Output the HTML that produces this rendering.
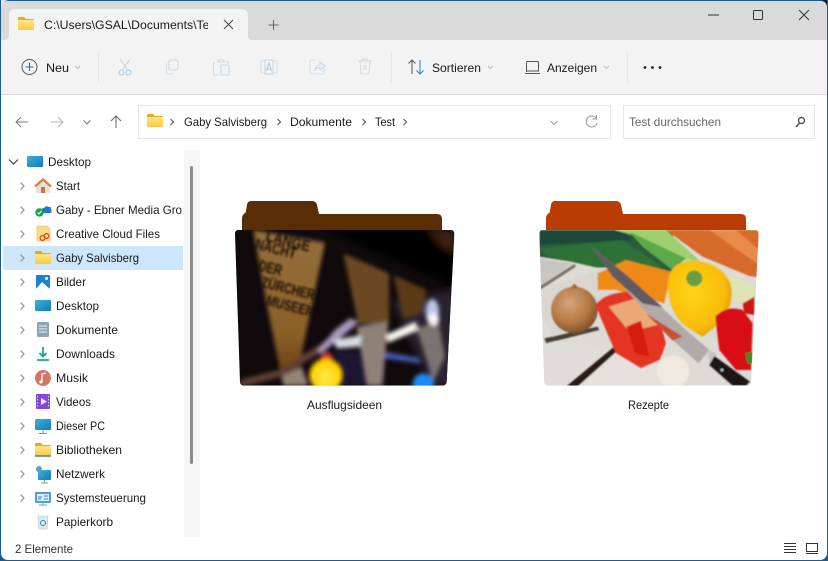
<!DOCTYPE html>
<html><head><meta charset="utf-8"><style>
html,body{margin:0;padding:0;background:#fff;width:828px;height:561px;overflow:hidden}
svg{display:block}
text{font-family:"Liberation Sans",sans-serif;font-size:12px;fill:#1a1a1a}
</style></head><body>
<svg width="828" height="561" viewBox="0 0 828 561" xmlns="http://www.w3.org/2000/svg">
<defs>
<linearGradient id="fy" x1="0" y1="0" x2="0" y2="1"><stop offset="0" stop-color="#ffe58a"/><stop offset="1" stop-color="#fbc93f"/></linearGradient>
<linearGradient id="sc" x1="0" y1="0" x2="1" y2="1"><stop offset="0" stop-color="#36b4dc"/><stop offset="1" stop-color="#1578b8"/></linearGradient>
<radialGradient id="on" cx=".4" cy=".35" r=".7"><stop offset="0" stop-color="#d8a478"/><stop offset=".6" stop-color="#b47844"/><stop offset="1" stop-color="#7a4a22"/></radialGradient>
<radialGradient id="yp" cx=".4" cy=".4" r=".7"><stop offset="0" stop-color="#ffd418"/><stop offset=".7" stop-color="#f8bc08"/><stop offset="1" stop-color="#e09000"/></radialGradient>
<radialGradient id="bulb" cx=".5" cy=".55" r=".55"><stop offset="0" stop-color="#ffe850"/><stop offset=".8" stop-color="#ffd400"/><stop offset="1" stop-color="#f0a000"/></radialGradient>
<linearGradient id="penn" x1="0" y1="0" x2="0" y2="1"><stop offset="0" stop-color="#94703a"/><stop offset=".7" stop-color="#8a5f28"/><stop offset="1" stop-color="#6a3a10"/></linearGradient>
<symbol id="folder" viewBox="0 0 16 13"><path d="M0 1.500Q0 0 1.500 0H6L8 2H14.500Q16 2 16 3.500V4H0Z" fill="#e8a820"/><path d="M0 3.500Q0 3 .6 3H15.400Q16 3 16 3.500V11.500Q16 13 14.500 13H1.500Q0 13 0 11.500Z" fill="url(#fy)"/></symbol>
<symbol id="chev" viewBox="0 0 8 10"><path d="M2.500 1.500L6 5L2.500 8.500" fill="none" stroke="#9a9a9a" stroke-width="1.300"/></symbol>
<symbol id="bc" viewBox="0 0 6 8"><path d="M1.500 1L4.500 4L1.500 7" fill="none" stroke="#555" stroke-width="1.100"/></symbol>
<filter id="b1" x="-10%" y="-10%" width="120%" height="120%"><feGaussianBlur stdDeviation="6"/></filter>
<filter id="b2" x="-30%" y="-30%" width="160%" height="160%"><feGaussianBlur stdDeviation="12"/></filter>
<filter id="b3" x="-10%" y="-10%" width="120%" height="120%"><feGaussianBlur stdDeviation="3"/></filter>
<filter id="b4" x="-10%" y="-10%" width="120%" height="120%"><feGaussianBlur stdDeviation="2.200"/></filter>
<clipPath id="fc"><path d="M40 120H676Q688 120 688 132L665 575Q664 587 652 587H57Q46 587 45 575L30 132Q30 120 40 120Z"/></clipPath>
<clipPath id="tabclip"><rect x="40" y="10" width="168" height="30"/></clipPath>
</defs>

<!-- window frame -->
<rect width="828" height="561" fill="#fff"/>
<rect x="0" y="0" width="828" height="561" fill="#1d5c8f"/>
<path d="M0 0H8Q1.500 1.500 1 9V0Z" fill="#dbe6ef"/>
<path d="M828 0H820Q827 1 827 8V0Z" fill="#0b2236"/>
<rect x="1" y="1" width="826" height="559" rx="7" fill="#fff"/>
<path d="M1 8Q1 1 8 1H820Q827 1 827 8V40H1Z" fill="#dadada"/>
<path d="M1 40H827V94H1Z" fill="#f3f3f3"/>
<rect x="1" y="94" width="826" height="1" fill="#d9d9d9"/>
<path d="M3 40H4Q9 40 9 35V16Q9 9 16 9H241Q248 9 248 16V35Q248 40 253 40H254Z" fill="#f3f3f3"/>

<!-- tab -->
<use href="#folder" x="18" y="17" width="16" height="13"/>
<g clip-path="url(#tabclip)"><text x="44" y="29" textLength="175" lengthAdjust="spacingAndGlyphs">C:\Users\GSAL\Documents\Test</text></g>
<path d="M224 20L233 29M233 20L224 29" stroke="#444" stroke-width="1" fill="none"/>
<path d="M268.500 25H278.500M273.500 20V30" stroke="#666" stroke-width="1" fill="none"/>

<!-- window controls -->
<path d="M708 15H719" stroke="#333" stroke-width="1"/>
<rect x="753.500" y="10.500" width="9" height="9" rx="1" fill="none" stroke="#333"/>
<path d="M799 10L809 20M809 10L799 20" stroke="#333" fill="none"/>

<!-- toolbar -->
<circle cx="29.500" cy="67" r="7.500" fill="none" stroke="#555" stroke-width="1"/>
<path d="M25.500 67H33.500M29.500 63V71" stroke="#1a6fc0" stroke-width="1"/>
<text x="46" y="72" textLength="23" lengthAdjust="spacingAndGlyphs">Neu</text>
<path d="M75 66L77.500 68.500L80 66" fill="none" stroke="#bbb"/>
<rect x="98" y="52" width="1" height="30" fill="#e6e6e6"/>
<g fill="none" stroke="#c4d8e8" stroke-width="1.100">
<path d="M120 59L127.500 70M130 59L122.500 70" stroke="#d0d0d0"/>
<circle cx="121.500" cy="72.500" r="2.500" stroke="#a8cce4"/><circle cx="128.500" cy="72.500" r="2.500" stroke="#a8cce4"/>
<rect x="169" y="60" width="9" height="10" rx="2"/>
<path d="M166.500 63V72Q166.500 74 168.500 74H174" stroke="#d8dee4"/>
<path d="M215 63H213.500V75H219M218 60H224V62H218ZM226 62H228V64" stroke="#d8d8d8"/>
<rect x="221" y="65" width="8" height="10" rx="1"/>
<path d="M265 61H261V73H265M273 61H277V73H273" stroke="#d8dee4"/>
<rect x="265" y="60" width="8" height="14" rx="0"/>
<path d="M266.500 71L269 63L271.500 71M267.300 69H270.700" stroke="#b8c8d8"/>
<path d="M316 60H312Q310 60 310 62V72Q310 74 312 74H322Q324 74 324 72V69" stroke="#d8dee4"/>
<path d="M315 70Q315 65 320 65V62L325 66L320 70V67.500Q317 67.500 315 70Z"/>
<path d="M358 61H372M363 61V59H367V61M360 61L361 74H369L370 61M364 65V70M366 65V70" stroke="#d8d8d8"/>
</g>
<rect x="391" y="52" width="1" height="30" fill="#e6e6e6"/>
<path d="M412 74V60M408.500 63.500L412 60L415.500 63.500" fill="none" stroke="#555"/>
<path d="M420 60V74M416.500 70.500L420 74L423.500 70.500" fill="none" stroke="#2a7fc8"/>
<text x="432" y="72" textLength="49" lengthAdjust="spacingAndGlyphs">Sortieren</text>
<path d="M488 66L490.500 68.500L493 66" fill="none" stroke="#bbb"/>
<path d="M526.500 72V62.500Q526.500 61.500 527.500 61.500H537.500Q538.500 61.500 538.500 62.500V71H526.500" fill="none" stroke="#555"/>
<path d="M525 73.500H540" stroke="#555"/>
<text x="547" y="72" textLength="50" lengthAdjust="spacingAndGlyphs">Anzeigen</text>
<path d="M604 66L606.500 68.500L609 66" fill="none" stroke="#bbb"/>
<rect x="627" y="52" width="1" height="30" fill="#e6e6e6"/>
<circle cx="645" cy="67.500" r="1.400" fill="#222"/><circle cx="652.500" cy="67.500" r="1.400" fill="#222"/><circle cx="660" cy="67.500" r="1.400" fill="#222"/>

<!-- nav bar -->
<path d="M16 122H28M21 117L16 122L21 127" fill="none" stroke="#777" stroke-width="1"/>
<path d="M51 122H63M58 117L63 122L58 127" fill="none" stroke="#b4b4b4" stroke-width="1"/>
<path d="M83.500 120.500L87 124L90.500 120.500" fill="none" stroke="#777"/>
<path d="M116 128V116M111 121L116 116L121 121" fill="none" stroke="#666"/>
<rect x="138.500" y="105.500" width="472" height="33" fill="#fff" stroke="#e6e6e6"/>
<use href="#folder" x="147" y="114" width="16" height="13"/>
<use href="#bc" x="169" y="118" width="6" height="8"/>
<text x="184" y="126" textLength="83" lengthAdjust="spacingAndGlyphs">Gaby Salvisberg</text>
<use href="#bc" x="276" y="118" width="6" height="8"/>
<text x="290" y="126" textLength="62" lengthAdjust="spacingAndGlyphs">Dokumente</text>
<use href="#bc" x="361" y="118" width="6" height="8"/>
<text x="375" y="126" textLength="20" lengthAdjust="spacingAndGlyphs">Test</text>
<use href="#bc" x="402" y="118" width="6" height="8"/>
<path d="M550.500 121L554 124.500L557.500 121" fill="none" stroke="#999"/>
<path d="M596 118A5.500 5.500 0 1 0 597 123M596.500 115V119H592.500" fill="none" stroke="#999"/>
<rect x="623.500" y="105.500" width="191" height="33" fill="#fff" stroke="#e6e6e6"/>
<text x="629" y="126" textLength="92" lengthAdjust="spacingAndGlyphs" style="fill:#666">Test durchsuchen</text>
<circle cx="801.500" cy="120.500" r="3" fill="none" stroke="#555" stroke-width="1.400"/>
<path d="M799.500 123L796 127" stroke="#555" stroke-width="1.600"/>

<!-- sidebar -->
<rect x="184" y="150" width="16" height="387" fill="#f5f5f5"/>
<rect x="190" y="166" width="3" height="298" rx="1.500" fill="#8b8b8b"/>
<rect x="3" y="246" width="180" height="24" fill="#cde6fb"/>

<path d="M9 159.500L13.500 164L18 159.500" fill="none" stroke="#444" stroke-width="1.200"/>
<rect x="27" y="156" width="16" height="11" rx="1" fill="url(#sc)"/>
<text x="48" y="166" textLength="43" lengthAdjust="spacingAndGlyphs">Desktop</text>

<use href="#chev" x="18" y="181" width="8" height="10"/>
<use href="#chev" x="18" y="205" width="8" height="10"/>
<use href="#chev" x="18" y="229" width="8" height="10"/>
<use href="#chev" x="18" y="253" width="8" height="10"/>
<use href="#chev" x="18" y="277" width="8" height="10"/>
<use href="#chev" x="18" y="301" width="8" height="10"/>
<use href="#chev" x="18" y="325" width="8" height="10"/>
<use href="#chev" x="18" y="349" width="8" height="10"/>
<use href="#chev" x="18" y="373" width="8" height="10"/>
<use href="#chev" x="18" y="397" width="8" height="10"/>
<use href="#chev" x="18" y="421" width="8" height="10"/>
<use href="#chev" x="18" y="445" width="8" height="10"/>
<use href="#chev" x="18" y="469" width="8" height="10"/>
<use href="#chev" x="18" y="493" width="8" height="10"/>

<text x="56" y="190" textLength="24" lengthAdjust="spacingAndGlyphs">Start</text>
<text x="56" y="214" textLength="126" lengthAdjust="spacingAndGlyphs">Gaby - Ebner Media Gro</text>
<text x="56" y="238" textLength="104" lengthAdjust="spacingAndGlyphs">Creative Cloud Files</text>
<text x="56" y="262" textLength="83" lengthAdjust="spacingAndGlyphs">Gaby Salvisberg</text>
<text x="56" y="286" textLength="30" lengthAdjust="spacingAndGlyphs">Bilder</text>
<text x="56" y="310" textLength="43" lengthAdjust="spacingAndGlyphs">Desktop</text>
<text x="56" y="334" textLength="62" lengthAdjust="spacingAndGlyphs">Dokumente</text>
<text x="56" y="358" textLength="59" lengthAdjust="spacingAndGlyphs">Downloads</text>
<text x="56" y="382" textLength="32" lengthAdjust="spacingAndGlyphs">Musik</text>
<text x="56" y="406" textLength="35" lengthAdjust="spacingAndGlyphs">Videos</text>
<text x="56" y="430" textLength="49" lengthAdjust="spacingAndGlyphs">Dieser PC</text>
<text x="56" y="454" textLength="66" lengthAdjust="spacingAndGlyphs">Bibliotheken</text>
<text x="56" y="478" textLength="49" lengthAdjust="spacingAndGlyphs">Netzwerk</text>
<text x="56" y="502" textLength="90" lengthAdjust="spacingAndGlyphs">Systemsteuerung</text>
<text x="56" y="526" textLength="57" lengthAdjust="spacingAndGlyphs">Papierkorb</text>

<!-- nav icons -->
<path d="M36 186L43 180L50 186V193H36Z" fill="#e4e2de"/>
<path d="M35 186.500L43 179.500L51 186.500" fill="none" stroke="#e07c38" stroke-width="2.200"/>
<rect x="41" y="187" width="4" height="6" fill="#c9783a"/>
<path d="M41 213Q40 208 44 208Q46 205 49 207Q51 206 51 209Q53 213 49 213Z" fill="#1c78c8"/>
<circle cx="39.500" cy="212.500" r="4.200" fill="#18a34a"/>
<path d="M37.500 212.500L39 214L41.500 211" fill="none" stroke="#fff"/>
<path d="M37 226H47L50 229V241H37Z" fill="#fbdc85" stroke="#e8b84a" stroke-width=".6"/>
<circle cx="42.500" cy="238" r="2.400" fill="none" stroke="#d8401c" stroke-width="1.200"/>
<circle cx="46.500" cy="236" r="2.400" fill="none" stroke="#d8401c" stroke-width="1.200"/>
<use href="#folder" x="35" y="251" width="16" height="13"/>
<rect x="36" y="275" width="14" height="14" rx="1" fill="#1c82d4"/>
<path d="M36 289L42 282L50 289Z" fill="#fff"/><circle cx="46.500" cy="278.500" r="1.500" fill="#fff"/>
<rect x="35" y="300" width="16" height="11" rx="1" fill="url(#sc)"/>
<rect x="37" y="322" width="12" height="15" rx="1" fill="#8fa3b8"/>
<path d="M39 326H47M39 329H47M39 332H47" stroke="#eef2f6"/>
<path d="M43 347V356M39.500 353L43 356.500L46.500 353" fill="none" stroke="#14a58a" stroke-width="1.700"/>
<path d="M37 360H49" stroke="#14a58a" stroke-width="1.700"/>
<circle cx="43" cy="378" r="8" fill="#d2766a"/>
<path d="M42 382V374L46 373" fill="none" stroke="#fff" stroke-width="1.300"/><circle cx="40.800" cy="382" r="1.500" fill="#fff"/>
<rect x="36" y="394" width="14" height="15" rx="1" fill="#8248d8"/>
<path d="M41 398V405L47 401.500Z" fill="#f0e6ff"/>
<path d="M37.500 396V407M48.500 396V407" stroke="#d8c4f4" stroke-dasharray="1.500 1.500"/>
<rect x="35" y="419" width="16" height="11" rx="1" fill="url(#sc)"/>
<path d="M43 430V433M39 433.500H47" stroke="#7a9ab0"/>
<use href="#folder" x="35" y="443" width="16" height="13"/>
<path d="M35 456H51" stroke="#1c82c8" stroke-width="1.400"/>
<rect x="38" y="470" width="13" height="10" rx="1" fill="url(#sc)"/>
<path d="M44.500 480V482.500M41 483H48" stroke="#7a9ab0"/>
<circle cx="39" cy="469" r="3" fill="#5aa0c8"/>
<path d="M39 472L43 477" stroke="#5aa0c8"/>
<rect x="35" y="492" width="16" height="11" rx="1" fill="#4e9fd8"/>
<rect x="37" y="494" width="12" height="7" fill="#dcefff"/>
<path d="M38 497H42M44 496H48M38 499H41M44 499H48" stroke="#3a82b8"/>
<path d="M43 503V505M39 505H47" stroke="#7a9ab0"/>
<path d="M38 516H48L47 529H39Z" fill="#dfe7ef" stroke="#b8c4d0" stroke-width=".6"/>
<circle cx="43" cy="523" r="2.500" fill="none" stroke="#2a88d8"/>

<!-- status bar -->
<text x="15" y="553" textLength="58" lengthAdjust="spacingAndGlyphs" style="fill:#333">2 Elemente</text>
<path d="M784 543.500H796M784 546.500H796M784 549.500H796M784 552.500H796" stroke="#333"/>
<rect x="806.500" y="543.500" width="11" height="8" fill="none" stroke="#333"/>
<path d="M806 553.500H818" stroke="#333"/>

<!-- Folder 1 -->
<path d="M242 230V219Q242 214 245.500 213L247 205Q247.500 201 251 201H312Q316 201 317 205L319 214H437Q442 214 442 219V230Z" fill="#5a2e05"/>
<g transform="translate(225 190) scale(.3333)">
<g clip-path="url(#fc)">
<rect x="20" y="110" width="680" height="490" fill="#100a0c"/>
<g filter="url(#b2)">
<path d="M300 120H690V290L600 250Z" fill="#050303"/>
<path d="M610 120H690V190L650 170Z" fill="#3c2410"/>
<path d="M500 330L690 300V590H620Z" fill="#2a2030"/>
<path d="M330 480H470V590H330Z" fill="#1c1230"/>
</g>
<g filter="url(#b1)">
<path d="M85 120L300 158L222 530L170 565L125 340Z" fill="url(#penn)"/>
<path d="M355 190L492 250L492 400L400 400Z" fill="#6a4a20"/>
<path d="M505 255L605 300L590 370L535 385Z" fill="#5a3a16"/>
<path d="M395 410L490 395L472 587H425Z" fill="#8f8078"/>
<path d="M575 415L640 395L660 500L625 575Z" fill="#7a7470"/>
<path d="M170 560L230 530L250 587H175Z" fill="#958474"/>
<path d="M45 570L160 540L290 460L380 390L395 405L300 480L170 560L50 590Z" fill="#5e4034"/>
<path d="M330 420L375 385L400 395L350 440L290 490L275 485Z" fill="#a898bc"/>
<path d="M482 435L572 395L580 420L490 458Z" fill="#f8f8f0"/>
<path d="M325 450L410 435L405 470L335 475Z" fill="#d8dce4"/>
<path d="M480 485L585 505L585 520L480 505Z" fill="#4858b8"/>
<circle cx="305" cy="505" r="18" fill="#e03028"/>
<circle cx="303" cy="555" r="50" fill="url(#bulb)"/>
<circle cx="595" cy="582" r="32" fill="#1c8cf0"/>
<ellipse cx="622" cy="365" rx="20" ry="38" fill="#bcc8e8"/>
<circle cx="625" cy="388" r="18" fill="#f4f4f4"/>
</g>
<g filter="url(#b3)">
<text x="120" y="152" transform="rotate(14 120 152)" textLength="135" lengthAdjust="spacingAndGlyphs" style="font-size:46px;fill:#1a110c;font-weight:bold">LANGE</text>
<text x="88" y="176" transform="rotate(14 88 176)" textLength="125" lengthAdjust="spacingAndGlyphs" style="font-size:46px;fill:#1a110c;font-weight:bold">NACHT</text>
<text x="97" y="240" transform="rotate(14 97 240)" textLength="72" lengthAdjust="spacingAndGlyphs" style="font-size:46px;fill:#1a110c;font-weight:bold">DER</text>
<text x="106" y="290" transform="rotate(14 106 290)" textLength="165" lengthAdjust="spacingAndGlyphs" style="font-size:44px;fill:#1a110c;font-weight:bold">ZÜRCHER</text>
<text x="122" y="345" transform="rotate(14 122 345)" textLength="145" lengthAdjust="spacingAndGlyphs" style="font-size:44px;fill:#1a110c;font-weight:bold">MUSEEN</text>
</g>
</g>
</g>
<text x="307" y="409" textLength="75" lengthAdjust="spacingAndGlyphs">Ausflugsideen</text>

<!-- Folder 2 -->
<path d="M546 230V219Q546 214 549.500 213L551 205Q551.500 201 555 201H616Q620 201 621 205L623 214H741Q746 214 746 219V230Z" fill="#ba3c04"/>
<g transform="translate(529.300 190) scale(.3333)">
<g clip-path="url(#fc)">
<rect x="20" y="110" width="680" height="490" fill="#dedad6"/>
<g filter="url(#b4)">
<path d="M30 205L130 220L30 290Z" fill="#c8c6c2"/>
<path d="M30 300L240 230L290 330L70 440L30 360Z" fill="#dad6d0"/>
<path d="M30 450L240 470L100 590H30Z" fill="#e0dcd8"/>
<path d="M140 590L260 480L420 500L430 590Z" fill="#e6e0dc"/>
<path d="M45 445L205 410L210 420L50 460Z" fill="#4a4036"/>
<path d="M110 590L255 470L265 482L145 590Z" fill="#2a1c14"/>
<path d="M30 290L135 222L140 230L35 298Z" fill="#7a7268"/>
<path d="M30 120H430L440 245L330 245L190 225L30 200Z" fill="#2c5c3e"/>
<path d="M30 120H280L310 150L30 165Z" fill="#1c4a3a"/>
<path d="M30 175L280 150L410 238L200 232L60 200Z" fill="#2f7034"/>
<path d="M255 120H410L530 230L680 290L675 340L640 345L470 210L330 140Z" fill="#9ed070"/>
<path d="M300 125L470 205L430 240L340 170Z" fill="#5da848"/>
<path d="M470 205L680 290L672 345L625 340Z" fill="#dfe4b6"/>
<path d="M410 120H690V262L660 258L520 200Z" fill="#d66a2c"/>
<path d="M540 120L690 225L690 180L620 120Z" fill="#e88a4a"/>
<path d="M205 250L290 210L425 245L405 340L260 300L205 300Z" fill="#f08a14"/>
<path d="M415 290Q415 220 480 212Q570 210 604 280Q620 340 570 400L520 440L470 410Q420 370 415 290Z" fill="url(#yp)"/>
<circle cx="495" cy="265" r="24" fill="#6a9e3c"/>
<circle cx="135" cy="360" r="70" fill="url(#on)"/>
<path d="M122 295L135 280L150 295Z" fill="#a06830"/>
<path d="M198 345Q230 300 330 305Q380 340 410 460L392 510L335 535L260 490Z" fill="#e43420"/>
<path d="M238 350L330 322L385 405L300 425Z" fill="#eba878"/>
<path d="M292 410L335 392L360 500L318 490Z" fill="#d61c08"/>
<path d="M558 380Q590 345 640 360L670 400L665 540L620 540L570 480Z" fill="#d80f14"/>
<path d="M640 340L675 320V375L645 370Z" fill="#cc1414"/>
<path d="M648 490L670 485V520L655 520Z" fill="#3a8a20"/>
<circle cx="432" cy="545" r="48" fill="#efe9df"/>
<path d="M185 168L300 262L470 420L540 480L508 520L430 450L290 300Z" fill="#b0aaa8"/>
<path d="M185 168L300 262L400 352L340 340L250 260Z" fill="#625c60"/>
<path d="M350 370L460 440L430 452Z" fill="#c85038"/>
<path d="M535 480L560 490L560 510L540 520Z" fill="#c4c4c4"/>
<path d="M555 498L662 575L650 587H610L540 525Z" fill="#1a1818"/>
<circle cx="578" cy="540" r="4" fill="#ddd"/>
</g>
</g>
</g>
<text x="628" y="409" textLength="41" lengthAdjust="spacingAndGlyphs">Rezepte</text>
</svg>
</body></html>
